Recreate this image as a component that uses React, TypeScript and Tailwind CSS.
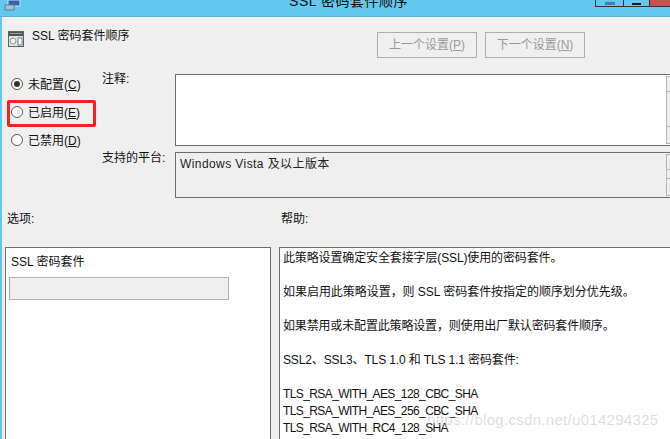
const font = "font-['Liberation_Sans','Noto_Sans_CJK_SC',sans-serif]";

function Radio({ checked, label, mnemonic }: { checked?: boolean; label: string; mnemonic: string }) {
  return (
    <div className="flex items-center gap-[5px] h-[14px] text-[12px] leading-[14px] text-[#111]">
      <span className="flex items-center justify-center w-[12px] h-[12px] rounded-full border border-[#555] bg-white">
        {checked && <span className="w-[6px] h-[6px] rounded-full bg-[#333]" />}
      </span>
      <span className="whitespace-nowrap mt-[2px]">
        {label}(<span className="underline">{mnemonic}</span>)
      </span>
    </div>
  );
}

function ScrollStub({ mid }: { mid: number }) {
  return (
    <div className="ml-auto mt-px mr-[-6px] w-[10px] shrink-0 h-[calc(100%-2px)] border border-[#b5b5b5] bg-[#efefef] flex flex-col">
      <div className="h-[15px] border-b border-[#b5b5b5]" />
      <div className="border-b border-[#b5b5b5]" style={{ height: mid }} />
    </div>
  );
}

function NavButton({ label, mnemonic }: { label: string; mnemonic: string }) {
  return (
    <div className="flex items-center justify-center w-[100px] h-[26px] border border-[#adadad] bg-[#efefef] text-[12px] text-[#9a9a9a]">
      <span>
        {label}(<span className="underline">{mnemonic}</span>)
      </span>
    </div>
  );
}

export default function App() {
  return (
    <div className={`relative w-[670px] h-[439px] overflow-hidden bg-[#efefef] flex flex-col ${font}`}>
      {/* title bar */}
      <div className="relative h-[17px] shrink-0 bg-[#63c8ee] border-b border-[#5cb0d6] flex justify-center">
        <div className="mt-[-7px] ml-[27px] text-[14px] leading-[16px] tracking-[0.5px] text-[#111] whitespace-nowrap">SSL 密码套件顺序</div>
        <svg className="absolute left-[4px] top-0" width="17" height="11" viewBox="0 0 17 11">
          <rect x="4" y="0" width="12" height="6" fill="#2f62b8" stroke="#d8dde0" strokeWidth="1" />
          <rect x="1" y="5" width="9" height="5" fill="#9fc4d8" stroke="#5a7f98" strokeWidth="1" />
        </svg>
        <div className="absolute right-0 top-0 flex h-[7px]">
          <div className="w-[28px] border border-t-0 border-r-0 border-[#333] flex justify-center">
            <div className="w-[10px] h-[3px] mt-[2px] bg-[#4a7d9c]" />
          </div>
          <div className="w-[26px] border-l border-b border-[#333] flex justify-center">
            <div className="w-[9px] h-[2px] mt-[3px] bg-[#111]" />
          </div>
          <div className="w-[21px] border-l border-b border-[#333] bg-[#c75050]" />
        </div>
      </div>

      <div className="flex-1 flex flex-col border-l-[2px] border-[#63c8ee] pl-[3px] min-h-0">
        {/* heading row */}
        <div className="flex h-[57px] shrink-0">
          <div className="flex items-start pt-[15px] pl-[3px] gap-[8px] w-[370px]">
            <svg className="mt-[-1px]" width="16" height="16" viewBox="0 0 16 16">
              <rect x="0.5" y="0.5" width="15" height="15" fill="#dfe6e4" stroke="#56656a" />
              <rect x="1" y="1" width="14" height="4" fill="#3f5560" />
              <rect x="2" y="2" width="12" height="1" fill="#a8a080" />
              <circle cx="5" cy="10" r="3" fill="#f4f4ea" stroke="#8a9a90" />
              <rect x="10" y="7" width="4" height="7" fill="#fff" stroke="#56656a" strokeWidth="0.8" />
            </svg>
            <span className="text-[12px] leading-[14px] text-[#111] mt-[-3px] whitespace-nowrap">SSL 密码套件顺序</span>
          </div>
          <div className="flex gap-[8px] pt-[15px] ml-[2px]">
            <NavButton label="上一个设置" mnemonic="P" />
            <NavButton label="下一个设置" mnemonic="N" />
          </div>
        </div>

        {/* state + comment / platform */}
        <div className="flex h-[137px] shrink-0">
          <div className="relative w-[170px] shrink-0 pl-[6px] pt-[3px] flex flex-col gap-[14px]">
            <Radio checked label="未配置" mnemonic="C" />
            <Radio label="已启用" mnemonic="E" />
            <Radio label="已禁用" mnemonic="D" />
            <div className="absolute left-[2px] top-[26px] w-[89px] h-[27px] border-[3px] border-[#f02418] rounded-[2px]" />
            <div className="absolute left-[97px] top-[-2px] text-[12px] leading-[14px] text-[#111]">注释:</div>
            <div className="absolute left-[97px] top-[77px] text-[12px] leading-[14px] text-[#111]">支持的平台:</div>
          </div>
          <div className="flex-1 flex flex-col gap-[6px]">
            <div className="h-[72px] border border-[#6e6e6e] bg-white border-r-0 flex">
              <ScrollStub mid={35} />
            </div>
            <div className="h-[46px] border border-[#6e6e6e] border-r-0 flex text-[12px] leading-[14px] text-[#222]">
              <span className="pl-[4px] pt-[4px] whitespace-nowrap tracking-[0.42px]">Windows Vista 及以上版本</span>
              <ScrollStub mid={9} />
            </div>
          </div>
        </div>

        {/* section labels */}
        <div className="flex h-[36px] pt-px shrink-0 text-[12px] leading-[14px] text-[#111]">
          <span className="w-[276px] pl-[2px]">选项:</span>
          <span>帮助:</span>
        </div>

        {/* panels */}
        <div className="flex-1 flex gap-[8px] min-h-0">
          <div className="w-[266px] shrink-0 border border-[#6e6e6e] border-b-0 bg-white pl-[3px]">
            <div className="pl-[2px] pt-[7px] text-[12px] leading-[14px] text-[#111]">SSL 密码套件</div>
            <div className="mt-[8px] w-[220px] h-[23px] border border-[#b0b0b0] bg-[#efefef]" />
          </div>
          <div className="flex-1 border border-[#6e6e6e] border-r-0 border-b-0 bg-white pl-[3px] pt-[2px] text-[12px] leading-[17px] text-[#111] whitespace-nowrap overflow-hidden">
            <div className="tracking-[-0.13px]">此策略设置确定安全套接字层(SSL)使用的密码套件。</div>
            <div className="mt-[17px] tracking-[-0.04px]">如果启用此策略设置，则 SSL 密码套件按指定的顺序划分优先级。</div>
            <div className="mt-[17px] tracking-[-0.16px]">如果禁用或未配置此策略设置，则使用出厂默认密码套件顺序。</div>
            <div className="mt-[17px] tracking-[-0.13px]">SSL2、SSL3、TLS 1.0 和 TLS 1.1 密码套件:</div>
            <div className="mt-[17px] tracking-[-0.6px]">TLS_RSA_WITH_AES_128_CBC_SHA</div>
            <div className="tracking-[-0.6px]">TLS_RSA_WITH_AES_256_CBC_SHA</div>
            <div className="tracking-[-0.6px]">TLS_RSA_WITH_RC4_128_SHA</div>
          </div>
        </div>
      </div>
      <div className="absolute left-[427px] top-[411px] text-[15px] leading-[18px] tracking-[0.3px] text-[#cfcfcf]/70 whitespace-nowrap">https://blog.csdn.net/u014294325</div>
    </div>
  );
}
